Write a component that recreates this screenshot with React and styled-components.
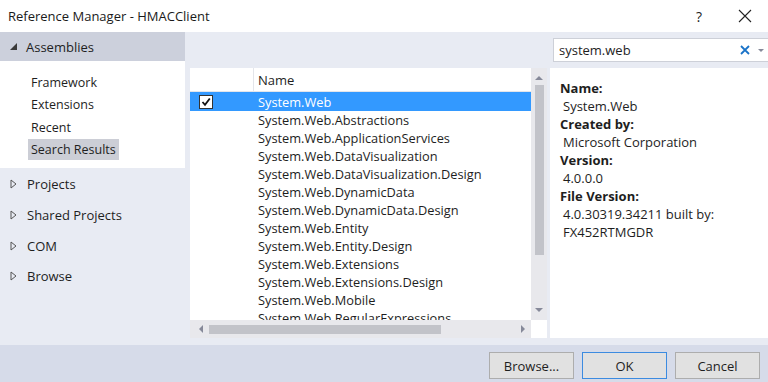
import React from "react";
import styled, { createGlobalStyle } from "styled-components";

const GlobalStyle = createGlobalStyle`
  *, *::before, *::after {
    box-sizing: border-box;
  }
  html, body {
    margin: 0;
    padding: 0;
    background: #ffffff;
  }
  body {
    font-family: "Segoe UI", "Open Sans", "Noto Sans", sans-serif;
    font-size: 12.5px;
    color: #1e1e1e;
  }
`;

const Window = styled.div`
  width: 768px;
  height: 382px;
  display: flex;
  flex-direction: column;
  overflow: hidden;
`;

const TitleBar = styled.div`
  height: 32px;
  display: flex;
  align-items: center;
  padding-left: 8px;
  background: #ffffff;
`;

const Title = styled.div`
  flex: 1;
  font-size: 13px;
  color: #1a1a1a;
`;

const TitleButton = styled.div`
  width: 46px;
  height: 32px;
  display: flex;
  align-items: center;
  justify-content: center;
  font-size: 14px;
  color: #222;
`;

const Body = styled.div`
  flex: 1;
  display: flex;
  min-height: 0;
`;

const Nav = styled.div`
  width: 185px;
  background: #e8ebf3;
  display: flex;
  flex-direction: column;
`;

const NavHeader = styled.div`
  height: 29px;
  display: flex;
  align-items: center;
  background: #ccd0dc;
  padding-left: 10px;
  gap: 9px;
  font-size: 13px;
`;

const SubList = styled.div`
  background: #ffffff;
  padding: 10px 0 7px 29px;
  display: flex;
  flex-direction: column;
`;

const SubItem = styled.div`
  height: 22.5px;
  display: flex;
  align-items: center;
  span {
    padding: 2px 3px;
    margin-left: -1px;
    background: ${(p) => (p.selected ? "#ccced6" : "transparent")};
  }
`;

const NodeList = styled.div`
  padding-top: 1px;
  display: flex;
  flex-direction: column;
`;

const NavNode = styled.div`
  height: 30.7px;
  display: flex;
  align-items: center;
  padding-left: 10px;
  gap: 10px;
  font-size: 13px;
`;

const Main = styled.div`
  flex: 1;
  background: #e8ebf3;
  display: flex;
  flex-direction: column;
  padding: 6px 0 7px 5px;
  gap: 6px;
  min-width: 0;
`;

const TopRow = styled.div`
  display: flex;
  justify-content: flex-end;
`;

const Search = styled.div`
  width: 215px;
  height: 24px;
  background: #ffffff;
  border: 1px solid #cdd0d8;
  border-right: none;
  display: flex;
  align-items: center;
  padding-left: 5px;
  font-size: 13px;
`;

const SearchText = styled.div`
  flex: 1;
`;

const Content = styled.div`
  flex: 1;
  display: flex;
  gap: 3px;
  min-height: 0;
`;

const ListBox = styled.div`
  width: 357px;
  background: #ffffff;
  display: grid;
  grid-template-columns: 1fr 16px;
  grid-template-rows: 1fr 18px;
`;

const ListView = styled.div`
  overflow: hidden;
  display: flex;
  flex-direction: column;
`;

const HeaderRow = styled.div`
  height: 24px;
  flex-shrink: 0;
  display: flex;
  border-bottom: 1px solid #e3e5ea;
`;

const HeaderCell = styled.div`
  width: ${(p) => p.w || "auto"};
  flex: ${(p) => (p.w ? "none" : 1)};
  border-right: ${(p) => (p.w ? "1px solid #e3e5ea" : "none")};
  display: flex;
  align-items: center;
  padding-left: 4px;
  font-size: 13px;
`;

const Row = styled.div`
  height: ${(p) => (p.selected ? "19px" : "18px")};
  flex-shrink: 0;
  display: flex;
  align-items: center;
  background: ${(p) => (p.selected ? "#3399ff" : "transparent")};
  color: ${(p) => (p.selected ? "#ffffff" : "#1e1e1e")};
  font-size: 12.8px;
  white-space: nowrap;
`;

const CheckCell = styled.div`
  width: 68px;
  flex: none;
  padding-left: 9px;
  display: flex;
  align-items: center;
`;

const CheckBox = styled.div`
  width: 14px;
  height: 14px;
  border: 1px solid #333;
  background: #fff;
  display: flex;
  align-items: center;
  justify-content: center;
`;

const VScroll = styled.div`
  background: #e8e8ec;
  display: flex;
  flex-direction: column;
  align-items: center;
  padding: 4px 0;
`;

const VThumb = styled.div`
  width: 9px;
  margin-top: 5px;
  height: 170px;
  background: #c2c3c9;
`;

const HScroll = styled.div`
  background: #e8e8ec;
  display: flex;
  align-items: center;
  padding: 0 6px 0 9px;
  gap: 6px;
`;

const HThumb = styled.div`
  width: 232px;
  height: 9px;
  background: #c2c3c9;
`;

const Corner = styled.div`
  background: #ffffff;
`;

const Spacer = styled.div`
  flex: 1;
`;

const Arrow = styled.div`
  width: 0;
  height: 0;
  border: ${(p) => p.size || 4}px solid transparent;
  ${(p) => p.dir === "up" && "border-bottom-color: #868999; border-top: none; margin-top: 4px;"}
  ${(p) => p.dir === "down" && "border-top-color: #868999; border-bottom: none;"}
  ${(p) => p.dir === "left" && "border-right-color: #868999; border-left: none;"}
  ${(p) => p.dir === "right" && "border-left-color: #868999; border-right: none;"}
`;

const Details = styled.div`
  flex: 1;
  background: #ffffff;
  padding: 11px 10px 0 10px;
  display: flex;
  flex-direction: column;
`;

const Label = styled.div`
  height: 18px;
  line-height: 18px;
  font-weight: 700;
  font-size: 13px;
`;

const Value = styled.div`
  height: 18px;
  line-height: 18px;
  padding-left: 3px;
  font-size: 13px;
  white-space: nowrap;
`;

const Footer = styled.div`
  height: 37px;
  background: #d6dbe9;
  display: flex;
  justify-content: flex-end;
  gap: 8px;
  padding: 7px 8px 0 0;
`;

const Button = styled.div`
  width: 85px;
  height: 27px;
  background: #e1e1e1;
  border: 1px solid ${(p) => (p.primary ? "#3c8be0" : "#adadad")};
  display: flex;
  align-items: center;
  justify-content: center;
  font-size: 13px;
  color: #1e1e1e;
`;

const items = [
  "System.Web",
  "System.Web.Abstractions",
  "System.Web.ApplicationServices",
  "System.Web.DataVisualization",
  "System.Web.DataVisualization.Design",
  "System.Web.DynamicData",
  "System.Web.DynamicData.Design",
  "System.Web.Entity",
  "System.Web.Entity.Design",
  "System.Web.Extensions",
  "System.Web.Extensions.Design",
  "System.Web.Mobile",
  "System.Web.RegularExpressions",
];

const details = [
  ["Name:", ["System.Web"]],
  ["Created by:", ["Microsoft Corporation"]],
  ["Version:", ["4.0.0.0"]],
  ["File Version:", ["4.0.30319.34211 built by:", "FX452RTMGDR"]],
];

function Expanded() {
  return (
    <svg width="7" height="7" viewBox="0 0 7 7">
      <path d="M7 0 L7 7 L0 7 Z" fill="#3a3a3a" />
    </svg>
  );
}

function Collapsed() {
  return (
    <svg width="7" height="10" viewBox="0 0 7 10">
      <path d="M1 1 L6 5 L1 9 Z" fill="none" stroke="#555" strokeWidth="1" />
    </svg>
  );
}

export default function App() {
  return (
    <>
      <GlobalStyle />
      <Window>
        <TitleBar>
          <Title>Reference Manager - HMACClient</Title>
          <TitleButton>?</TitleButton>
          <TitleButton>
            <svg width="14" height="14" viewBox="0 0 14 14">
              <path d="M1 1 L13 13 M13 1 L1 13" stroke="#222" strokeWidth="1.1" />
            </svg>
          </TitleButton>
        </TitleBar>
        <Body>
          <Nav>
            <NavHeader>
              <Expanded />
              <span>Assemblies</span>
            </NavHeader>
            <SubList>
              <SubItem><span>Framework</span></SubItem>
              <SubItem><span>Extensions</span></SubItem>
              <SubItem><span>Recent</span></SubItem>
              <SubItem selected><span>Search Results</span></SubItem>
            </SubList>
            <NodeList>
              {["Projects", "Shared Projects", "COM", "Browse"].map((n) => (
                <NavNode key={n}>
                  <Collapsed />
                  <span>{n}</span>
                </NavNode>
              ))}
            </NodeList>
          </Nav>
          <Main>
            <TopRow>
              <Search>
                <SearchText>system.web</SearchText>
                <svg width="10" height="10" viewBox="0 0 10 10">
                  <path d="M1 1 L9 9 M9 1 L1 9" stroke="#1a73c8" strokeWidth="1.8" />
                </svg>
                <div style={{ width: 8 }} />
                <Arrow dir="down" size={3} />
                <div style={{ width: 4 }} />
              </Search>
            </TopRow>
            <Content>
              <ListBox>
                <ListView>
                  <HeaderRow>
                    <HeaderCell w="64px" />
                    <HeaderCell>Name</HeaderCell>
                  </HeaderRow>
                  {items.map((name, i) => (
                    <Row key={name} selected={i === 0}>
                      <CheckCell>
                        {i === 0 && (
                          <CheckBox>
                            <svg width="10" height="10" viewBox="0 0 10 10">
                              <path d="M1.5 5 L4 7.8 L8.8 1.5" fill="none" stroke="#111" strokeWidth="1.8" />
                            </svg>
                          </CheckBox>
                        )}
                      </CheckCell>
                      {name}
                    </Row>
                  ))}
                </ListView>
                <VScroll>
                  <Arrow dir="up" />
                  <VThumb />
                  <Spacer />
                  <Arrow dir="down" style={{ marginBottom: 4 }} />
                </VScroll>
                <HScroll>
                  <Arrow dir="left" />
                  <HThumb />
                  <Spacer />
                  <Arrow dir="right" />
                </HScroll>
                <Corner />
              </ListBox>
              <Details>
                {details.map(([label, values]) => (
                  <React.Fragment key={label}>
                    <Label>{label}</Label>
                    {values.map((v) => (
                      <Value key={v}>{v}</Value>
                    ))}
                  </React.Fragment>
                ))}
              </Details>
            </Content>
          </Main>
        </Body>
        <Footer>
          <Button>Browse...</Button>
          <Button primary>OK</Button>
          <Button>Cancel</Button>
        </Footer>
      </Window>
    </>
  );
}
